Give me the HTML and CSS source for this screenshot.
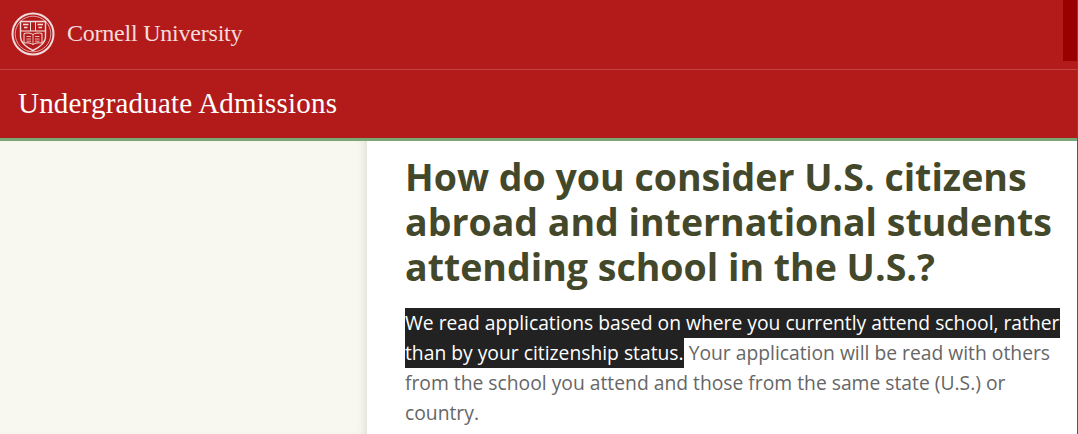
FILE: index.html
```
<!DOCTYPE html>
<html lang="en">
<head>
<meta charset="utf-8">
<title>Undergraduate Admissions</title>
<link rel="stylesheet" href="styles.css">
</head>
<body>
<header class="site-header">
  <div class="brand-bar">
    <a class="brand" href="#">
      <svg class="seal" width="44" height="44" viewBox="0 0 44 44" fill="none" stroke="#f3dcdc">
        <circle cx="22" cy="22" r="20.5" stroke-width="2"/>
        <circle cx="22" cy="22" r="17.8" stroke-width="0.7"/>
        <path d="M9.500 9.500H34.500V25C34.500 31.500 28 35.500 22 38.500C16 35.500 9.500 31.500 9.500 25Z" stroke-width="1.4"/>
        <path d="M9.500 19H34.500" stroke-width="1.1"/>
        <path d="M19.500 9.500V19M24.500 9.500V19" stroke-width="1"/>
        <path d="M12 12.500H17.500M13 15.500H16.500M26.500 12.500H32M27.500 15.500H31" stroke-width="1.5"/>
        <path d="M13 21.500C16.500 20.500 20 21 22 22.500C24 21 27.500 20.500 31 21.500V31C27.500 30.500 24 31 22 32.500C20 31 16.500 30.500 13 31Z" stroke-width="1"/>
        <path d="M22 22.500V32.500M15.500 24.500H20M15.500 27H20M15.500 29.200H20M24 24.500H28.500M24 27H28.500M24 29.200H28.500" stroke-width="0.8"/>
      </svg>
      <span class="brand-name">Cornell University</span>
    </a>
    <div class="search-tab"></div>
  </div>
  <div class="title-bar">
    <h2 class="site-title">Undergraduate Admissions</h2>
  </div>
</header>
<div class="page">
  <aside class="sidebar"></aside>
  <main class="content">
    <h1 class="question">How do you consider U.S. citizens abroad and international students attending school in the U.S.?</h1>
    <p class="answer"><span class="selected">We read applications based on where you currently attend school, rather than by your citizenship status.</span> Your application will be read with others from the school you attend and those from the same state (U.S.) or country.</p>
  </main>
</div>
</body>
</html>
```
FILE: styles.css
```
* { box-sizing: border-box; }
html, body { margin: 0; height: 100%; overflow: hidden; background: #fff; }
body { border-right: 1px solid #555; display: flex; flex-direction: column; }
.site-header { background: #b31b1b; border-bottom: 3px solid #7aa874; flex: none; }
.brand-bar { height: 70px; display: flex; justify-content: space-between; align-items: flex-start; border-bottom: 1px solid #c04444; }
.brand { display: flex; align-items: center; gap: 12px; padding: 11px 0 0 11px; text-decoration: none; }
.seal { flex: none; margin-top: 1px; }
.brand-name { font-family: "Liberation Serif", serif; font-size: 24px; color: #f3dcdc; letter-spacing: -0.22px; }
.search-tab { width: 14px; height: 61px; background: #990000; }
.title-bar { height: 68px; padding: 16px 0 0 18px; }
.site-title { margin: 0; font-family: "Liberation Serif", serif; font-weight: 400; font-size: 29px; line-height: 34px; color: #fff; letter-spacing: 0.2px; }
.page { flex: 1; display: flex; min-height: 0; }
.sidebar { width: 367px; flex: none; background: #f8f8f0; box-shadow: inset -8px 0 8px -6px #dcdcd4; }
.content { flex: 1; padding: 13px 14px 0 38px; }
.question { margin: 0 0 19px; font-family: "Open Sans", sans-serif; font-weight: 700; font-size: 37.5px; line-height: 45px; color: #44482a; }
.answer { margin: 0; font-family: "Open Sans", sans-serif; font-size: 19.3px; line-height: 30px; color: #666; }
.selected { background: #222; color: #fff; padding: 1px 0 2px; }
```
